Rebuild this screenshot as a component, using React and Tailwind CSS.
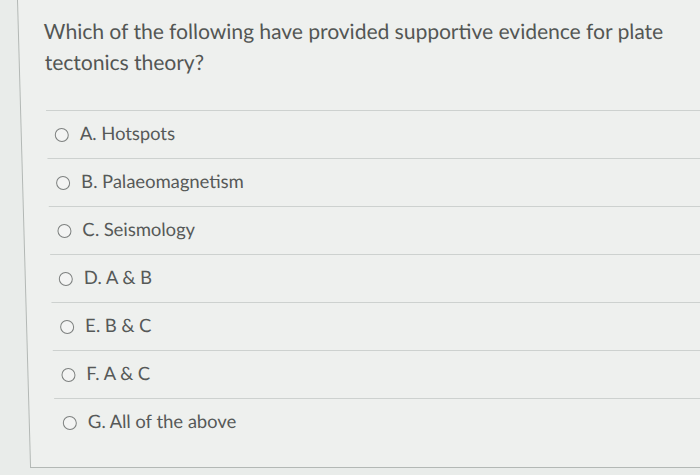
const options = [
  "A. Hotspots",
  "B. Palaeomagnetism",
  "C. Seismology",
  "D. A & B",
  "E. B & C",
  "F. A & C",
  "G. All of the above",
];

export default function App() {
  return (
    <div className="w-[700px] h-[475px] overflow-hidden bg-[#e9ecea] pl-[17px] font-['Lato','Liberation_Sans',sans-serif]">
      <div className="w-[720px] h-[468px] border-l border-b border-[#b3b8b5] bg-[#eef0ee] skew-x-[1.6deg] origin-top-left">
        <p className="pt-[15px] pl-[25px] pr-[30px] text-[21px] leading-[31px] text-[#535654]">
          Which of the following have provided supportive evidence for plate tectonics theory?
        </p>
        <ul className="ml-[25px] mt-[33px]">
          {options.map((o) => (
            <li
              key={o}
              className="h-[48px] border-t border-[#cdd1cf] flex items-center pl-[8px] gap-[11px] text-[18.4px] text-[#565958]"
            >
              <span className="w-[14px] h-[14px] rounded-full border-[1.5px] border-[#7d807f] bg-[#f3f4f3] shrink-0" />
              <span className="-mt-[2px]">{o}</span>
            </li>
          ))}
        </ul>
      </div>
    </div>
  );
}
